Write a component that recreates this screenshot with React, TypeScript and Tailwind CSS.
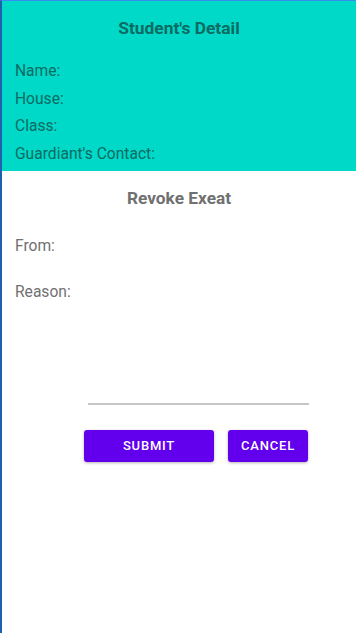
export default function App() {
  return (
    <div
      className="h-[633px] w-[356px] overflow-hidden border-l-2 border-t border-l-[#1f5fae] border-t-[#3d8af0] bg-white"
      style={{ fontFamily: "Roboto, 'Liberation Sans', sans-serif" }}
    >
      {/* Student details */}
      <div className="h-[170px] bg-[#00d9c8] px-[13px] pt-[17px] text-[15.6px] text-[#0c6b62]">
        <h1 className="text-center text-[17.4px] font-bold leading-[20px]">Student's Detail</h1>
        <div className="mt-[24px] flex flex-col gap-[8px] leading-[19.5px]">
          <p>Name:</p>
          <p>House:</p>
          <p>Class:</p>
          <p>Guardiant's Contact:</p>
        </div>
      </div>

      {/* Revoke form */}
      <div className="px-[13px] pt-[17px] text-[15.6px] text-[#707070]">
        <h2 className="text-center text-[17.3px] font-bold leading-[20px]">Revoke Exeat</h2>
        <p className="mt-[29px] leading-[19px]">From:</p>
        <p className="mt-[27px] leading-[19px]">Reason:</p>
      </div>

      <div className="ml-[86px] mt-[101px] h-[2px] w-[221px] bg-[#c6c6c6]" />

      <div className="mt-[25px] flex gap-[14px] pl-[82px]">
        <button className="flex h-[32px] w-[130px] items-center justify-center rounded-[3px] bg-[#6200ee] text-[13px] font-medium tracking-[0.8px] text-white shadow-[0_1px_3px_rgba(0,0,0,0.3)]">
          SUBMIT
        </button>
        <button className="flex h-[32px] w-[80px] items-center justify-center rounded-[3px] bg-[#6200ee] text-[13px] font-medium tracking-[0.8px] text-white shadow-[0_1px_3px_rgba(0,0,0,0.3)]">
          CANCEL
        </button>
      </div>
    </div>
  );
}
